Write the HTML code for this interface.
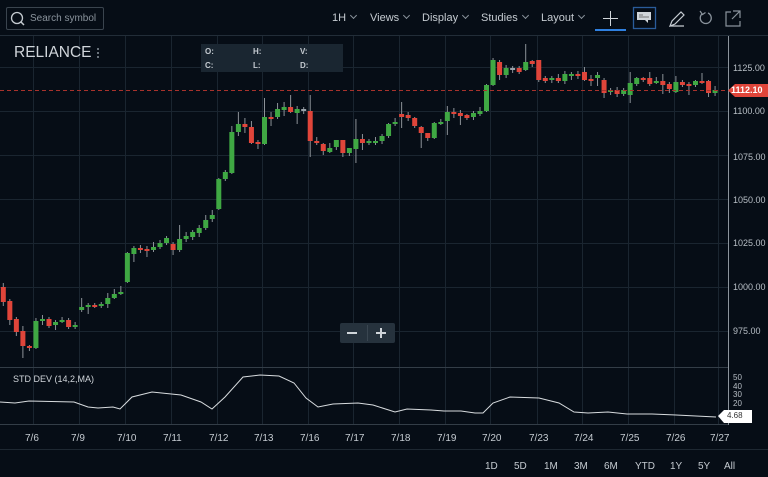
<!DOCTYPE html>
<html><head><meta charset="utf-8"><style>
*{margin:0;padding:0;box-sizing:border-box}
body{width:768px;height:477px;background:#060d16;font-family:"Liberation Sans",sans-serif;color:#c5cbd1;overflow:hidden;position:relative}
.a{position:absolute;white-space:nowrap}
.m{font-size:11px;color:#c5cbd1}
.chev{display:inline-block;width:5px;height:5px;border-right:1px solid #8a939c;border-bottom:1px solid #8a939c;transform:rotate(45deg);margin-left:5px;position:relative;top:-3px}
.yl{font-size:9px;color:#b8bfc6;left:733px}
.dl{font-size:10px;color:#c5cbd1;top:433px}
.bb{font-size:10px;color:#c5cbd1;top:461px}
</style></head><body>
<svg class="a" style="left:0;top:0" width="768" height="477">
<g stroke="#1a2530" stroke-width="1">
<line x1="0" y1="67.5" x2="728" y2="67.5"/><line x1="0" y1="111.5" x2="728" y2="111.5"/><line x1="0" y1="155.5" x2="728" y2="155.5"/><line x1="0" y1="199.5" x2="728" y2="199.5"/><line x1="0" y1="243.5" x2="728" y2="243.5"/><line x1="0" y1="287.5" x2="728" y2="287.5"/><line x1="0" y1="331.5" x2="728" y2="331.5"/>
<g id="vg"></g>
</g>
<line x1="0" y1="35.5" x2="768" y2="35.5" stroke="#222d38"/>
<line x1="0" y1="367.5" x2="728" y2="367.5" stroke="#333d47"/>
<line x1="0" y1="424.5" x2="728" y2="424.5" stroke="#333d47"/>
<line x1="0" y1="449.5" x2="768" y2="449.5" stroke="#1e2832"/>
<line x1="728.5" y1="36" x2="728.5" y2="425" stroke="#8c949c"/>
<g id="cd"></g>
<line x1="0" y1="90.5" x2="728" y2="90.5" stroke="#a8322c" stroke-dasharray="4,3"/>
<polyline fill="none" stroke="#d8dcdf" stroke-width="1" points="0,402 15,403 29,401 74,402 88,407 98,408 113,407 120,409 132,397 152,392 181,395 201,402 212,409 225,397 243,377 260,375 279,376 294,383 306,398 318,407 333,404 358,403 373,405 395,412 407,409 431,410 444,411 461,411 475,413 483,413 493,403 510,397 539,398 559,403 574,412 588,413 608,412 627,414 652,414 676,415 696,416 716,417"/>
<polygon points="728,90.5 735,84 768,84 768,97 735,97" fill="#e0453a"/>
<polygon points="718,416 724,410 752,410 752,423 724,423" fill="#fff"/>
<circle cx="17" cy="18" r="5.5" fill="none" stroke="#c5cbd1" stroke-width="1.3"/><line x1="21" y1="22" x2="24" y2="25" stroke="#c5cbd1" stroke-width="1.5"/>
<line x1="603" y1="18.5" x2="618" y2="18.5" stroke="#d0d5da"/><line x1="610.5" y1="11" x2="610.5" y2="26" stroke="#d0d5da"/>
<rect x="595" y="29" width="31" height="2" fill="#2f80e0"/>
<rect x="633.5" y="7.5" width="22" height="21" fill="none" stroke="#2a5c9a" stroke-width="1.3"/>
<path d="M637 12h14v8h-3v3l-3-3h-8z" fill="#d0d5da"/><path d="M639 15h4M639 17h10" stroke="#555" stroke-width="0.8"/>
<path d="M670 26l2-5 9-9 3 3-9 9z M670 26h14" fill="none" stroke="#c5cbd1" stroke-width="1.2"/>
<path d="M708 13a5.5 5.5 0 1 1-6 1" fill="none" stroke="#8a939c" stroke-width="1.3"/><path d="M700 11l2.5 3.5 3-2" fill="none" stroke="#8a939c" stroke-width="1.2"/>
<path d="M731 12h-5v14h14v-5 M733 11h7v7 M740 11l-8 8" fill="none" stroke="#8a939c" stroke-width="1.2"/>
<circle cx="98" cy="49" r="1" fill="#8a939c"/><circle cx="98" cy="53" r="1" fill="#8a939c"/><circle cx="98" cy="57" r="1" fill="#8a939c"/>
</svg>
<div class="a" style="left:6px;top:7px;width:98px;height:23px;border:1px solid #3a444e;border-radius:2px"></div>
<div class="a" style="left:30px;top:13px;font-size:10px;color:#8a939c">Search symbol</div>
<div class="a m" style="left:332px;top:12px">1H<span class="chev"></span></div>
<div class="a m" style="left:370px;top:12px">Views<span class="chev"></span></div>
<div class="a m" style="left:422px;top:12px">Display<span class="chev"></span></div>
<div class="a m" style="left:481px;top:12px">Studies<span class="chev"></span></div>
<div class="a m" style="left:541px;top:12px">Layout<span class="chev"></span></div>
<div class="a" style="left:14px;top:44px;font-size:15.5px;color:#d0d5da">RELIANCE</div>
<div class="a" style="left:201px;top:44px;width:142px;height:28px;background:#1a2631;font-size:8px;color:#c5cbd1;font-weight:bold">
<span class="a" style="left:4px;top:3px">O:</span><span class="a" style="left:52px;top:3px">H:</span><span class="a" style="left:99px;top:3px">V:</span>
<span class="a" style="left:4px;top:17px">C:</span><span class="a" style="left:52px;top:17px">L:</span><span class="a" style="left:99px;top:17px">D:</span></div>
<div class="a yl" style="top:63px">1125.00</div><div class="a yl" style="top:106px">1100.00</div><div class="a yl" style="top:152px">1075.00</div><div class="a yl" style="top:195px">1050.00</div><div class="a yl" style="top:238px">1025.00</div><div class="a yl" style="top:282px">1000.00</div><div class="a yl" style="top:326px">975.00</div>
<div class="a" style="left:731px;top:85px;font-size:9px;color:#fff;font-weight:bold">1112.10</div>
<div class="a" style="left:733px;top:374px;font-size:8px;color:#b8bfc6;line-height:8.7px">50<br>40<br>30<br>20</div>
<div class="a" style="left:727px;top:411px;font-size:8px;color:#333">4.68</div>
<div class="a" style="left:13px;top:374px;font-size:9px;color:#d0d5da">STD DEV (14,2,MA)</div>
<div class="a" style="left:340px;top:323px;width:55px;height:20px;background:#26323d;border-radius:2px"></div>
<div class="a" style="left:367px;top:325px;width:1px;height:16px;background:#3a4651"></div>
<div class="a" style="left:347px;top:332px;width:10px;height:2px;background:#d0d5da"></div>
<div class="a" style="left:376px;top:332px;width:10px;height:2px;background:#d0d5da"></div><div class="a" style="left:380px;top:328px;width:2px;height:10px;background:#d0d5da"></div>
<div id="dates"></div>
<div class="a bb" style="left:485px">1D</div><div class="a bb" style="left:514px">5D</div><div class="a bb" style="left:544px">1M</div><div class="a bb" style="left:574px">3M</div><div class="a bb" style="left:604px">6M</div><div class="a bb" style="left:635px">YTD</div><div class="a bb" style="left:670px">1Y</div><div class="a bb" style="left:698px">5Y</div><div class="a bb" style="left:724px">All</div>
<script>
var dx=[33,79,125,171,217,262,308,353,399,445,490,537,582,628,674,718],dn=["7/6","7/9","7/10","7/11","7/12","7/13","7/16","7/17","7/18","7/19","7/20","7/23","7/24","7/25","7/26","7/27"];
var vg="",dh="";
dx.forEach(function(x,i){vg+='<line x1="'+(x+.5)+'" y1="36" x2="'+(x+.5)+'" y2="425"/>';dh+='<div class="a dl" style="left:'+(x-8)+'px">'+dn[i]+'</div>';});
document.getElementById("vg").innerHTML=vg;document.getElementById("dates").innerHTML=dh;
var d="r287-302-283-306 r301-320-299-325 r319-332-317-336 r331-346-326-358 r346-348-345-351 g321-348-318-349 g319-321-315-325 r319-326-317-328 g322-325-320-330 g320-322-317-323 r320-327-318-329 g325-327-322-329 g307-310-298-312 g305-307-303-314 r305-307-303-308 g304-306-302-308 g298-304-293-308 g294-298-289-299 g292-294-286-295 g253-282-252-283 g248-254-246-262 r248-250-245-253 r249-251-246-257 g247-250-242-252 g243-247-240-249 g238-243-236-245 r244-250-242-255 g239-250-225-252 g236-239-232-242 g232-237-230-240 g228-233-225-237 g220-228-215-230 g215-219-210-222 g179-209-178-210 g172-179-170-181 g132-173-126-174 g124-132-112-136 r124-127-118-133 r127-143-121-144 r142-144-140-149 g117-144-98-145 r117-119-112-126 g109-117-103-119 g107-110-102-116 r107-112-95-113 g109-113-106-124 x109-110-107-114 r111-141-95-157 r141-143-137-145 r144-151-143-155 g148-152-143-153 g140-147-140-150 r140-153-140-157 g148-153-148-156 g139-149-119-163 r139-143-134-150 g141-143-139-145 g141-143-137-145 g136-141-134-144 g124-136-123-138 g122-124-118-126 r114-117-102-128 r115-118-112-121 r118-126-117-128 r127-133-126-148 r133-138-133-141 g123-138-122-139 g122-124-119-125 g112-121-106-135 r112-114-108-118 r113-116-110-125 r115-118-114-120 g113-117-111-120 g111-114-107-116 g85-111-84-112 g60-85-58-86 r62-75-60-80 g68-75-65-78 x68-69-66-73 r68-72-66-74 g62-70-44-71 r61-64-60-67 r60-80-60-82 r78-81-76-83 g78-80-76-83 r78-81-74-83 g74-81-71-84 g74-76-72-80 r74-76-71-79 r72-80-67-81 r79-81-75-86 g75-78-72-86 r80-93-78-98 g90-92-88-95 r90-94-87-97 g90-94-88-96 g83-95-72-103 g78-84-77-86 r78-80-77-82 r78-84-72-86 g81-83-77-84 r81-85-74-94 r84-89-82-93 g82-92-76-93 r82-85-80-87 r84-86-82-95 g81-85-80-87 r81-83-73-84 r81-93-80-97 g90-93-86-96".split(" ");
var s="";
d.forEach(function(c,i){var col=c[0]=="g"?"#3fa843":c[0]=="r"?"#e0453a":"#9aa2aa";var p=c.slice(1).split("-").map(Number);var x=3.3+i*6.53;
s+='<line x1="'+x+'" y1="'+p[2]+'" x2="'+x+'" y2="'+p[3]+'" stroke="#8c9298" stroke-width="1"/>';
s+='<rect x="'+(x-2.5)+'" y="'+p[0]+'" width="5" height="'+Math.max(2,p[1]-p[0])+'" fill="'+col+'"/>';});
document.getElementById("cd").innerHTML=s;
</script>
</body></html>
